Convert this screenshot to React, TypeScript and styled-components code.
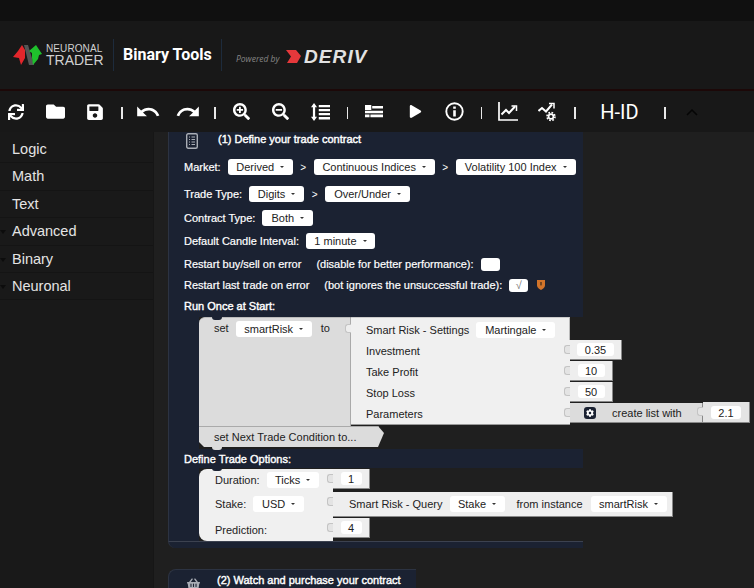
import styled, { createGlobalStyle } from "styled-components";
import {
  FaSync,
  FaFolder,
  FaSave,
  FaSearchPlus,
  FaSearchMinus,
  FaPlay,
  FaCog,
  FaShoppingBasket,
} from "react-icons/fa";
import { MdUndo, MdRedo } from "react-icons/md";

const GlobalStyle = createGlobalStyle`
  html, body { margin: 0; padding: 0; height: 100%; background: #1f1f1f; overflow: hidden; }
  body { font-family: "Liberation Sans", Arial, sans-serif; }
`;

const Page = styled.div`
  width: 754px;
  height: 588px;
  display: flex;
  flex-direction: column;
  overflow: hidden;
`;
const TopStrip = styled.div`
  height: 21px;
  background: #101010;
`;
const Header = styled.div`
  height: 68px;
  background: #181818;
  border-bottom: 2px solid #1c0808;
  display: flex;
  align-items: center;
  padding-left: 13px;
`;
const LogoText = styled.div`
  margin-left: 4px;
  color: #d0d0d0;
  width: 58px;
`;
const LogoTop = styled.div`
  font-size: 10px;
  line-height: 10px;
  letter-spacing: 0.1px;
  white-space: nowrap;
`;
const LogoBottom = styled.div`
  font-size: 14px;
  line-height: 13px;
  white-space: nowrap;
`;
const HeadRule = styled.div`
  width: 1px;
  height: 32px;
  background: #1d2b3c;
  margin: 0 9px;
`;
const AppName = styled.div`
  font-family: Roboto, sans-serif;
  font-weight: 700;
  font-size: 16px;
  color: #fff;
  width: 89px;
  white-space: nowrap;
  margin-bottom: 2px;
`;
const Powered = styled.div`
  margin-left: 5px;
  font-family: "Open Sans", sans-serif;
  font-style: italic;
  font-size: 8.5px;
  color: #858585;
  width: 50px;
  margin-top: 6px;
  white-space: nowrap;
`;
const DerivWord = styled.div`
  font-family: "Liberation Sans", sans-serif;
  font-style: italic;
  font-weight: 700;
  font-size: 19px;
  letter-spacing: 1.1px;
  color: #e2e2e2;
  margin-left: 3px;
  margin-top: 3px;
`;
const Toolbar = styled.div`
  height: 41px;
  background: #181818;
  display: flex;
  align-items: center;
  margin-left: -4px;
  color: #fff;
`;
const Tool = styled.div<{ $shift?: number }>`
  width: 39.5px;
  height: 100%;
  flex: none;
  display: flex;
  align-items: center;
  justify-content: center;
  font-size: 17px;
  margin-left: ${(p) => p.$shift ?? 0}px;
`;
const Sep = styled.div<{ $w?: number }>`
  width: 14px;
  flex: none;
  height: 100%;
  display: flex;
  align-items: center;
  justify-content: center;
  margin-top: 2px;
  &::after {
    content: "";
    width: ${(p) => p.$w ?? 2}px;
    height: 12px;
    background: #e8e8e8;
  }
`;
const IdLabel = styled.div`
  width: 76px;
  flex: none;
  text-align: center;
  font-family: Roboto, sans-serif;
  font-weight: 400;
  font-size: 20px;
  color: #fff;
`;
const Main = styled.div`
  flex: 1;
  display: flex;
  min-height: 0;
`;
const Sidebar = styled.div`
  width: 153px;
  padding-top: 4px;
  background: #191919;
  border-right: 1px solid #161616;
  flex: none;
`;
const Category = styled.div<{ $open?: boolean }>`
  height: 26.4px;
  line-height: 27px;
  padding-left: 12px;
  font-size: 14.5px;
  color: #e4e4e4;
  border-bottom: 1px solid #141414;
  position: relative;
  &::before {
    content: "";
    display: ${(p) => (p.$open ? "block" : "none")};
    position: absolute;
    left: 0;
    top: 12px;
    border-left: 3.5px solid transparent;
    border-right: 3.5px solid transparent;
    border-top: 4px solid #0c0c0c;
  }
`;
const Canvas = styled.div`
  flex: 1;
  position: relative;
  overflow: hidden;
  background: #1f1f1f;
`;
const Hat = styled.div`
  position: absolute;
  left: 14px;
  top: 0;
  width: 415px;
`;
const HatSecond = styled(Hat)`
  top: 437px;
  width: 247px;
  height: 40px;
  background: #1b2232;
  border-radius: 8px 0 0 0;
  border-top: 1px solid #2c3342;
  border-left: 1px solid #2c3342;
`;
const Section = styled.div<{ $h?: number }>`
  background: #1b2232;
  border-left: 1px solid #2c3342;
  height: ${(p) => p.$h ?? 22}px;
  display: flex;
  align-items: center;
  padding-left: 15px;
  color: #fff;
  font-size: 11px;
  white-space: nowrap;
  box-sizing: border-box;
`;
const TitleRow = styled(Section)`
  padding: 1px 0 0 17px;
  align-items: flex-start;
  -webkit-text-stroke: 0.4px #fff;
`;
const TitleIcon = styled.div`
  width: 16px;
  margin-right: 16px;
  color: #a9adb5;
  display: flex;
  -webkit-text-stroke: 0;
`;
const Label = styled.span`
  -webkit-text-stroke: 0.2px #fff;
`;
const BoldLabel = styled.span`
  -webkit-text-stroke: 0.4px #fff;
`;
const Gt = styled.span`
  width: 21px;
  text-align: center;
  font-size: 10px;
  flex: none;
`;
const Drop = styled.span<{ $w: number; $h?: number }>`
  display: inline-flex;
  align-items: center;
  justify-content: center;
  width: ${(p) => p.$w}px;
  height: ${(p) => p.$h ?? 16}px;
  background: #fff;
  color: #222;
  border-radius: 3px;
  font-size: 11px;
  margin-left: ${(p) => (p.$h ? 0 : 7)}px;
  white-space: nowrap;
  flex: none;
  -webkit-text-stroke: 0;
  &::after {
    content: "";
    margin-left: 6px;
    border-left: 2px solid transparent;
    border-right: 2px solid transparent;
    border-top: 2.5px solid #333;
  }
`;
const GtDrop = styled(Drop)`
  margin-left: 0;
`;
const Check = styled.span<{ $x: number }>`
  display: inline-flex;
  align-items: center;
  justify-content: center;
  width: 19px;
  height: 13px;
  background: #fff;
  border-radius: 3px;
  margin-left: ${(p) => p.$x}px;
  color: #777;
  font-size: 11px;
`;
const Gap = styled.span<{ $w: number }>`
  display: inline-block;
  width: ${(p) => p.$w}px;
`;
const Statement = styled.div<{ $h: number }>`
  display: flex;
  height: ${(p) => p.$h}px;
`;
const Spine = styled.div`
  width: 31px;
  flex: none;
  background: #1b2232;
  border-left: 1px solid #2c3342;
  box-sizing: border-box;
`;
const Stack = styled.div`
  display: flex;
  flex-direction: column;
  color: #222;
  font-size: 11px;
  white-space: nowrap;
`;
const OptionStack = styled(Stack)`
  margin-top: 1px;
`;
const SetRow = styled.div`
  display: flex;
`;
const SetBlock = styled.div`
  width: 152px;
  height: 109px;
  background: #dcdcdc;
  border-top: 1px solid #bbb;
  border-right: 1px solid #aaa;
  box-sizing: border-box;
  border-radius: 6px 0 0 0;
  display: flex;
  align-items: flex-start;
  padding: 3px 0 0 15px;
  line-height: 15px;
  position: relative;
  &::after {
    content: "";
    position: absolute;
    right: -1px;
    top: 6px;
    width: 6px;
    height: 9px;
    box-sizing: border-box;
    background: #eee;
    border: 1px solid #c4c4c4;
    border-right: 0;
    border-radius: 3px 0 0 3px;
  }
`;
const Notch = styled.i`
  position: absolute;
  left: 13px;
  top: -1px;
  width: 10px;
  height: 3px;
  background: #1b2232;
  border-radius: 0 0 5px 5px;
`;
const SetDrop = styled(Drop)`
  margin: 0 9px 0 7px;
`;
const SmartBlock = styled.div`
  display: flex;
  flex-direction: column;
`;
const SmartRow = styled.div<{ $h: number }>`
  display: flex;
  height: ${(p) => p.$h}px;
  align-items: flex-start;
`;
const SmartCell = styled.div<{ $last?: boolean }>`
  width: 219px;
  height: 100%;
  box-sizing: border-box;
  background: #f0f0f0;
  display: flex;
  align-items: center;
  padding-left: 15px;
  position: relative;
  border-bottom: ${(p) => (p.$last ? "1px solid #999" : "none")};
`;
const SmartHead = styled(SmartCell)`
  border-top: 1px solid #ccc;
  border-right: 1px solid #bbb;
  padding-top: 1px;
  gap: 7px;
`;
const Value = styled.div<{ $w: number; $bg?: string }>`
  width: ${(p) => p.$w}px;
  height: 20px;
  flex: none;
  box-sizing: border-box;
  background: ${(p) => p.$bg ?? "#eee"};
  border-right: 1px solid #888;
  border-bottom: 1px solid #888;
  display: flex;
  align-items: center;
  justify-content: center;
  position: relative;
  &::before {
    content: "";
    position: absolute;
    left: -6px;
    top: 5px;
    width: 6px;
    height: 9px;
    box-sizing: border-box;
    background: #e4e4e4;
    border: 1px solid #c4c4c4;
    border-right: 0;
    border-radius: 3px 0 0 3px;
  }
`;
const NumField = styled.span<{ $w: number }>`
  width: ${(p) => p.$w}px;
  height: 13px;
  background: #fff;
  border-radius: 3px;
  text-align: center;
  line-height: 14px;
`;
const ListBlock = styled(Value)`
  justify-content: flex-start;
  padding-left: 14px;
  width: 133px;
  background: #dcdcdc;
`;
const ListIcon = styled.span`
  display: flex;
  align-items: center;
  justify-content: center;
  width: 12px;
  height: 12px;
  background: #1b2232;
  color: #fff;
  border-radius: 3px;
  font-size: 8px;
  margin-right: 16px;
`;
const ListValue = styled(Value)`
  position: absolute;
  left: 133px;
  top: -1px;
  width: 47px;
  height: 21px;
  background: #e4e4e4;
`;
const NextWrap = styled.div`
  position: relative;
  width: 185px;
  height: 21px;
`;
const NextBlock = styled.div`
  height: 21px;
  background: #dcdcdc;
  border-top: 1px solid #aaa;
  line-height: 21px;
  padding-left: 15px;
  box-sizing: border-box;
  clip-path: polygon(0 0, 179px 0, 185px 7px, 179px 21px, 5px 21px, 0 16px);
`;
const NextBump = styled.i`
  position: absolute;
  left: 13px;
  bottom: -3px;
  width: 10px;
  height: 3px;
  background: #dcdcdc;
  border-radius: 0 0 5px 5px;
`;
const OptionRow = styled.div<{ $h: number }>`
  display: flex;
  height: ${(p) => p.$h}px;
  align-items: flex-start;
`;
const OptionCell = styled.div<{ $radius?: string; $lift?: number }>`
  width: 134px;
  height: 100%;
  background: #f0f0f0;
  border-radius: ${(p) => p.$radius ?? "0"};
  display: flex;
  align-items: center;
  padding: 0 0 ${(p) => p.$lift ?? 0}px 16px;
  box-sizing: border-box;
  gap: 7px;
  position: relative;
`;
const QueryBlock = styled(Value)`
  width: 340px;
  height: 25px;
  margin-top: 1px;
  justify-content: flex-start;
  padding: 0 0 1px 16px;
  background: #eee;
  gap: 7px;
`;
const FromText = styled.span`
  margin: 0 1px 0 5px;
`;
const Foot = styled.div`
  height: 7px;
  background: #1b2232;
  border-left: 1px solid #2c3342;
  border-top: 1px solid #3c4250;
  border-radius: 0 0 0 7px;
  box-sizing: border-box;
`;
const SecondTitle = styled.div`
  display: flex;
  color: #fff;
  font-size: 11px;
  white-space: nowrap;
  padding: 4px 0 0 18px;
  -webkit-text-stroke: 0.4px #fff;
`;
const BasketIcon = styled.span`
  width: 12px;
  margin: 3px 18px 0 0;
  color: #a9adb5;
  font-size: 13px;
  -webkit-text-stroke: 0;
`;

const SortIcon = () => (
  <svg width="19" height="18" viewBox="0 0 22 19" preserveAspectRatio="none" fill="currentColor">
    <path d="M3.5 0 7 4.5H4.8v10H7L3.5 19 0 14.5h2.2v-10H0z" />
    <path d="M9 2h13v2.4H9zM9 6.3h13v2.4H9zM9 10.6h13V13H9zM9 14.9h13v2.4H9z" />
  </svg>
);
const ListIconGlyph = () => (
  <svg width="18" height="13" viewBox="0 0 20 13" preserveAspectRatio="none" fill="currentColor">
    <path d="M0 0h7v5H0zM8 1h12v2.6H8zM0 5.8h20v2.4H0zM0 9.6h5v2.6H0zM6 9.6h14v2.6H6z" />
  </svg>
);
const InfoIcon = () => (
  <svg width="19" height="19" viewBox="0 0 19 19" fill="none">
    <circle cx="9.5" cy="9.5" r="8.2" stroke="currentColor" strokeWidth="1.9" />
    <path d="M8.2 4.4h2.6v2.4H8.2zM8.2 8.2h2.6v6.2H8.2z" fill="currentColor" />
  </svg>
);
const ChartIcon = () => (
  <svg width="20" height="19" viewBox="0 0 20 19" fill="none" stroke="currentColor">
    <path d="M1 0v18h19" strokeWidth="1.7" />
    <path d="M3.5 12.5 8 8l3 3 6-6.5" strokeWidth="2" />
    <path d="M13.5 4h5v5" strokeWidth="1.5" />
  </svg>
);
const ChartGearIcon = () => (
  <svg width="19" height="20" viewBox="0 0 19 20" fill="none" stroke="currentColor">
    <path d="M0.5 9 4 6l4 3.5L14 2.5" strokeWidth="2" />
    <path d="M11 1.5h5v5" strokeWidth="1.5" />
    <circle cx="13" cy="14.5" r="2.4" strokeWidth="1.7" />
    <circle cx="13" cy="14.5" r="4" strokeWidth="1.6" strokeDasharray="1.7 1.44" />
  </svg>
);
const ChevronUp = () => (
  <svg width="12" height="8" viewBox="0 0 12 8" fill="none" stroke="#050505" strokeWidth="1.5">
    <path d="M1 7 6 2l5 5" />
  </svg>
);
const Logo = () => (
  <svg width="29" height="20" viewBox="0 0 29 20">
    <polygon points="11,0 15,0 21,20 16,20" fill="#555" />
    <polygon points="9,0 12,5 12,13 8,20 6,13 0,12 5,6" fill="#e3262b" />
    <polygon points="23,0 29,9 26,10 25,14 20,20 19,13 19,8 16,6" fill="#1fc02c" />
  </svg>
);
const DerivMark = () => (
  <svg width="15" height="13" viewBox="0 0 15 13" style={{ marginTop: 3 }}>
    <polygon points="0,0 10,0 15,6 11,13 1,13 5,6.5" fill="#e5383b" />
  </svg>
);
const ContractIcon = () => (
  <svg width="12" height="16" viewBox="0 0 12 16" fill="none" stroke="currentColor">
    <rect x="0.7" y="0.7" width="10.6" height="14.6" rx="1.5" strokeWidth="1.4" />
    <path d="M3 4h1M5.5 4H9M3 6.5h1M5.5 6.5H9M3 9h1M5.5 9H9M3 11.5h1M5.5 11.5H9" strokeWidth="1" />
  </svg>
);
const ShieldIcon = () => (
  <svg width="8" height="10" viewBox="0 0 8 10" style={{ marginLeft: 9 }}>
    <path d="M0 0h8v5.5C8 8 5.5 9 4 10 2.5 9 0 8 0 5.5z" fill="#d2742a" />
    <rect x="3.4" y="2" width="1.2" height="3.4" fill="#3b2a1a" />
  </svg>
);

export default function App() {
  return (
    <Page>
      <GlobalStyle />
      <TopStrip />
      <Header>
        <Logo />
        <LogoText>
          <LogoTop>NEURONAL</LogoTop>
          <LogoBottom>TRADER</LogoBottom>
        </LogoText>
        <HeadRule />
        <AppName>Binary Tools</AppName>
        <HeadRule />
        <Powered>Powered by</Powered>
        <DerivMark />
        <DerivWord>DERIV</DerivWord>
      </Header>
      <Toolbar>
        <Tool><FaSync size={16} /></Tool>
        <Tool><FaFolder size={19} /></Tool>
        <Tool><FaSave size={18} /></Tool>
        <Sep />
        <Tool><MdUndo size={26} /></Tool>
        <Tool><MdRedo size={26} /></Tool>
        <Sep />
        <Tool><FaSearchPlus /></Tool>
        <Tool><FaSearchMinus /></Tool>
        <Tool><SortIcon /></Tool>
        <Sep $w={1} />
        <Tool><ListIconGlyph /></Tool>
        <Tool $shift={2}><FaPlay size={13} /></Tool>
        <Tool><InfoIcon /></Tool>
        <Sep $w={1} />
        <Tool><ChartIcon /></Tool>
        <Tool><ChartGearIcon /></Tool>
        <Sep />
        <IdLabel>H-ID</IdLabel>
        <Sep />
        <Tool $shift={1}><ChevronUp /></Tool>
      </Toolbar>
      <Main>
        <Sidebar>
          <Category>Logic</Category>
          <Category>Math</Category>
          <Category>Text</Category>
          <Category $open>Advanced</Category>
          <Category $open>Binary</Category>
          <Category $open>Neuronal</Category>
        </Sidebar>
        <Canvas>
          <Hat>
            <TitleRow $h={21}>
              <TitleIcon><ContractIcon /></TitleIcon>
              (1) Define your trade contract
            </TitleRow>
            <Section $h={28}>
              <Label>Market:</Label>
              <Drop $w={65}>Derived</Drop>
              <Gt>&gt;</Gt>
              <GtDrop $w={121}>Continuous Indices</GtDrop>
              <Gt>&gt;</Gt>
              <GtDrop $w={120}>Volatility 100 Index</GtDrop>
            </Section>
            <Section $h={26}>
              <Label>Trade Type:</Label>
              <Drop $w={55}>Digits</Drop>
              <Gt>&gt;</Gt>
              <GtDrop $w={85}>Over/Under</GtDrop>
            </Section>
            <Section $h={22}>
              <Label>Contract Type:</Label>
              <Drop $w={51}>Both</Drop>
            </Section>
            <Section $h={24}>
              <Label>Default Candle Interval:</Label>
              <Drop $w={69}>1 minute</Drop>
            </Section>
            <Section $h={22}>
              <Label>Restart buy/sell on error</Label>
              <Gap $w={15} />
              <Label>(disable for better performance):</Label>
              <Check $x={7} />
            </Section>
            <Section $h={20}>
              <Label>Restart last trade on error</Label>
              <Gap $w={15} />
              <Label>(bot ignores the unsuccessful trade):</Label>
              <Check $x={7}>√</Check>
              <ShieldIcon />
            </Section>
            <Section $h={22}>
              <BoldLabel>Run Once at Start:</BoldLabel>
            </Section>
            <Statement $h={132}>
              <Spine />
              <Stack>
                <SetRow>
                  <SetBlock>
                    <Notch />
                    set
                    <SetDrop $w={76}>smartRisk</SetDrop>
                    to
                  </SetBlock>
                  <SmartBlock>
                    <SmartRow $h={23}>
                      <SmartHead>
                        Smart Risk - Settings
                        <Drop $w={79} $h={16}>Martingale</Drop>
                      </SmartHead>
                    </SmartRow>
                    <SmartRow $h={21}>
                      <SmartCell>Investment</SmartCell>
                      <Value $w={52}><NumField $w={37}>0.35</NumField></Value>
                    </SmartRow>
                    <SmartRow $h={21}>
                      <SmartCell>Take Profit</SmartCell>
                      <Value $w={43}><NumField $w={27}>10</NumField></Value>
                    </SmartRow>
                    <SmartRow $h={21}>
                      <SmartCell>Stop Loss</SmartCell>
                      <Value $w={43}><NumField $w={27}>50</NumField></Value>
                    </SmartRow>
                    <SmartRow $h={22}>
                      <SmartCell $last>Parameters</SmartCell>
                      <ListBlock $w={133}>
                        <ListIcon><FaCog /></ListIcon>
                        create list with
                        <ListValue $w={47}><NumField $w={30}>2.1</NumField></ListValue>
                      </ListBlock>
                    </SmartRow>
                  </SmartBlock>
                </SetRow>
                <NextWrap>
                  <NextBlock>set Next Trade Condition to...</NextBlock>
                  <NextBump />
                </NextWrap>
              </Stack>
            </Statement>
            <Section $h={19}>
              <BoldLabel>Define Trade Options:</BoldLabel>
            </Section>
            <Statement $h={73}>
              <Spine />
              <OptionStack>
                <OptionRow $h={22}>
                  <OptionCell $radius="8px 0 0 0">
                    <Notch />
                    Duration:
                    <Drop $w={52} $h={16}>Ticks</Drop>
                  </OptionCell>
                  <Value $w={37}><NumField $w={21}>1</NumField></Value>
                </OptionRow>
                <OptionRow $h={27}>
                  <OptionCell $lift={2}>
                    Stake:
                    <Drop $w={51} $h={16}>USD</Drop>
                  </OptionCell>
                  <QueryBlock $w={340}>
                    Smart Risk - Query
                    <Drop $w={55} $h={16}>Stake</Drop>
                    <FromText>from instance</FromText>
                    <Drop $w={76} $h={16}>smartRisk</Drop>
                  </QueryBlock>
                </OptionRow>
                <OptionRow $h={23}>
                  <OptionCell $radius="0 0 0 8px">Prediction:</OptionCell>
                  <Value $w={37}><NumField $w={21}>4</NumField></Value>
                </OptionRow>
              </OptionStack>
            </Statement>
            <Foot />
          </Hat>
          <HatSecond>
            <SecondTitle>
              <BasketIcon><FaShoppingBasket /></BasketIcon>
              (2) Watch and purchase your contract
            </SecondTitle>
          </HatSecond>
        </Canvas>
      </Main>
    </Page>
  );
}
